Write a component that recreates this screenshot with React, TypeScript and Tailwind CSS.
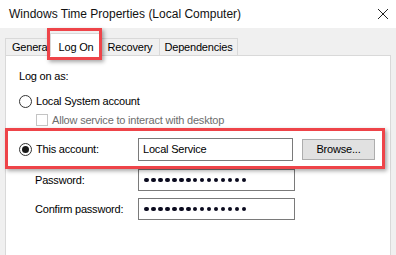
const Radio = ({ checked }: { checked?: boolean }) => (
  <div className="w-[13px] h-[13px] rounded-full border border-[#333333] bg-white flex items-center justify-center shrink-0">
    {checked && <div className="w-[7px] h-[7px] rounded-full bg-[#1a1a1a]" />}
  </div>
)

const Dots = () => (
  <div className="flex gap-[2.4px] pl-[5px]">
    {Array.from({ length: 15 }).map((_, i) => (
      <div key={i} className="w-[4.6px] h-[4.6px] rounded-full bg-[#0a0a1e]" />
    ))}
  </div>
)

const App = () => {
  return (
    <div
      className="relative w-[396px] h-[255px] overflow-hidden bg-[#f0f0f0] text-[11px] tracking-[-0.2px] text-black"
      style={{ fontFamily: '"Liberation Sans", Arial, sans-serif' }}
    >
      {/* title bar */}
      <div className="h-[28px] bg-white flex items-center justify-between pl-[9px] pr-[4px]">
        <span className="text-[12px] tracking-normal text-[#111]">Windows Time Properties (Local Computer)</span>
        <svg width="12" height="12" viewBox="0 0 12 12" className="mr-[3px]">
          <path d="M1 1 L11 11 M11 1 L1 11" stroke="#222" strokeWidth="1" fill="none" />
        </svg>
      </div>

      {/* tabs */}
      <div className="flex items-end h-[22px] mt-[5px] pl-[5px]">
        <div className="w-[47px] h-[17px] border border-b-0 border-[#d9d9d9] bg-[#f0f0f0] pl-[6px] leading-[16px] overflow-hidden whitespace-nowrap">
          General
        </div>
        <div className="relative z-10 -ml-[2px] w-[52px] h-[23px] -mb-[1px] border border-b-0 border-[#d9d9d9] bg-white flex items-start justify-center pt-[5px]">
          Log On
        </div>
        <div className="-ml-[1px] w-[59px] h-[17px] border border-b-0 border-l-0 border-[#d9d9d9] bg-[#f0f0f0] text-center leading-[16px]">
          Recovery
        </div>
        <div className="w-[78px] h-[17px] border border-b-0 border-l-0 border-[#d9d9d9] bg-[#f0f0f0] text-center leading-[16px]">
          Dependencies
        </div>
      </div>

      {/* panel */}
      <div className="mx-[5px] w-[386px] h-[220px] bg-white border border-[#d9d9d9] pt-[12px] pl-[13px]">
        <div className="h-[16px] flex items-center">Log on as:</div>

        <div className="mt-[9px] h-[16px] flex items-center gap-[4px]">
          <Radio />
          <span>Local System account</span>
        </div>

        <div className="mt-[3px] h-[16px] flex items-center gap-[4px] pl-[17px]">
          <div className="w-[12px] h-[12px] border border-[#c4c4c4] bg-white" />
          <span className="text-[#6d6d6d]">Allow service to interact with desktop</span>
        </div>

        <div className="mt-[10px] h-[23px] flex items-center">
          <div className="w-[119px] flex items-center gap-[4px]">
            <Radio checked />
            <span>This account:</span>
          </div>
          <div className="w-[155px] h-[23px] border border-[#7a7a7a] flex items-center pl-[4px]">Local Service</div>
          <div className="ml-[9px] w-[73px] h-[21px] border border-[#adadad] bg-[#e1e1e1] flex items-center justify-center">
            Browse...
          </div>
        </div>

        <div className="mt-[8px] h-[22px] flex items-center">
          <div className="w-[119px] pl-[16px]">Password:</div>
          <div className="w-[157px] h-[22px] border border-[#7a7a7a] flex items-center">
            <Dots />
          </div>
        </div>

        <div className="mt-[7px] h-[22px] flex items-center">
          <div className="w-[119px] pl-[16px]">Confirm password:</div>
          <div className="w-[157px] h-[22px] border border-[#7a7a7a] flex items-center">
            <Dots />
          </div>
        </div>
      </div>

      {/* red highlight annotations */}
      <div className="absolute left-[47px] top-[28px] w-[55px] h-[32px] border-[3px] border-[#ee4449] shadow-[2px_2px_4px_rgba(0,0,0,0.35)] z-20" />
      <div className="absolute left-[5px] top-[128px] w-[380px] h-[41px] border-[3px] border-[#ee4449] shadow-[2px_2px_4px_rgba(0,0,0,0.35)] z-20" />
    </div>
  )
}

export default App
